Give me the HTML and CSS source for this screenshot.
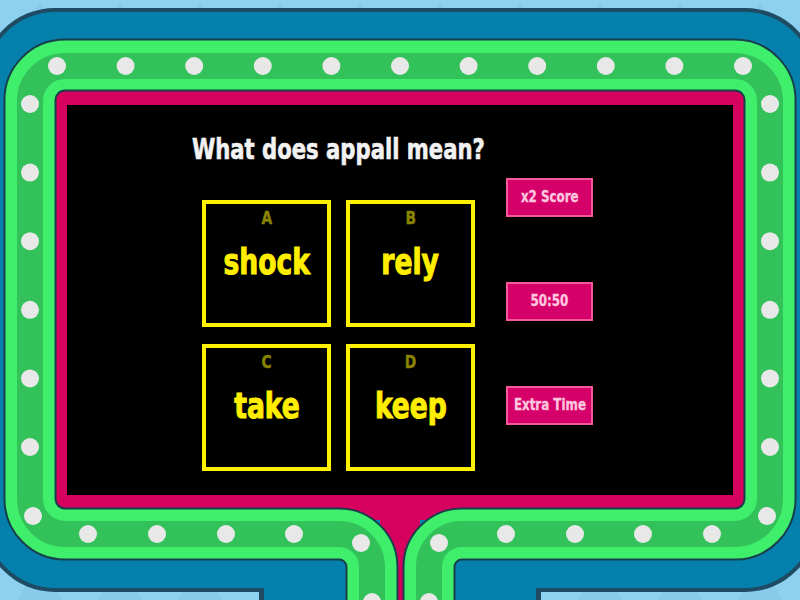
FILE: index.html
```html
<!DOCTYPE html>
<html lang="en">
<head>
<meta charset="utf-8">
<title>Quiz Game Show</title>
<link rel="stylesheet" href="styles.css">
</head>
<body>
<div class="stage">
  <svg class="frame" viewBox="0 0 800 600" width="800" height="600" aria-hidden="true">
    <defs>
      <pattern id="tri" width="80" height="70" patternUnits="userSpaceOnUse">
        <path d="M0 70 L40 0 L80 70 Z" fill="#7fc3e3"/>
      </pattern>
    </defs>
    <rect width="800" height="600" fill="#8dd0ef"/>
    <rect width="800" height="600" fill="url(#tri)" opacity="0.45"/>
    <rect x="-18" y="8" width="836" height="584" rx="73" fill="#1e4b62"/>
    <rect x="259" y="500" width="282" height="110" fill="#1e4b62"/>
    <rect x="-14" y="12" width="828" height="576" rx="69" fill="#0580ad"/>
    <rect x="264" y="500" width="272" height="110" fill="#0580ad"/>
    <rect x="40" y="80" width="720" height="440" fill="#d6005f"/>
    <rect x="380" y="500" width="40" height="110" fill="#d6005f"/>
    <g fill="none">
      <path stroke="#173f4c" stroke-width="53" d="M372 620 V567 A33 33 0 0 0 339 534 H65 A35 35 0 0 1 30 499 V101 A35 35 0 0 1 65 65 H735 A35 35 0 0 1 770 101 V499 A35 35 0 0 1 735 534 H462 A33 33 0 0 0 429 567 V620"/>
      <path stroke="#3fef6c" stroke-width="49" d="M372 620 V567 A33 33 0 0 0 339 534 H65 A35 35 0 0 1 30 499 V101 A35 35 0 0 1 65 65 H735 A35 35 0 0 1 770 101 V499 A35 35 0 0 1 735 534 H462 A33 33 0 0 0 429 567 V620"/>
      <path stroke="#33c159" stroke-width="26" d="M372 620 V567 A33 33 0 0 0 339 534 H65 A35 35 0 0 1 30 499 V101 A35 35 0 0 1 65 66 H735 A35 35 0 0 1 770 101 V499 A35 35 0 0 1 735 534 H462 A33 33 0 0 0 429 567 V620"/>
    </g>
    <g fill="#e8e8e8">
      <circle cx="57" cy="66" r="9"/><circle cx="125.6" cy="66" r="9"/><circle cx="194.2" cy="66" r="9"/>
      <circle cx="262.8" cy="66" r="9"/><circle cx="331.4" cy="66" r="9"/><circle cx="400" cy="66" r="9"/>
      <circle cx="468.6" cy="66" r="9"/><circle cx="537.2" cy="66" r="9"/><circle cx="605.8" cy="66" r="9"/>
      <circle cx="674.4" cy="66" r="9"/><circle cx="743" cy="66" r="9"/>
      <circle cx="30" cy="104" r="9"/><circle cx="30" cy="172.6" r="9"/><circle cx="30" cy="241.2" r="9"/>
      <circle cx="30" cy="309.8" r="9"/><circle cx="30" cy="378.4" r="9"/><circle cx="30" cy="447" r="9"/>
      <circle cx="33" cy="516" r="9"/>
      <circle cx="770" cy="104" r="9"/><circle cx="770" cy="172.6" r="9"/><circle cx="770" cy="241.2" r="9"/>
      <circle cx="770" cy="309.8" r="9"/><circle cx="770" cy="378.4" r="9"/><circle cx="770" cy="447" r="9"/>
      <circle cx="767" cy="516" r="9"/>
      <circle cx="88" cy="534" r="9"/><circle cx="157" cy="534" r="9"/><circle cx="226" cy="534" r="9"/>
      <circle cx="294" cy="534" r="9"/><circle cx="361" cy="543" r="9"/>
      <circle cx="439" cy="543" r="9"/><circle cx="506" cy="534" r="9"/><circle cx="575" cy="534" r="9"/>
      <circle cx="643" cy="534" r="9"/><circle cx="712" cy="534" r="9"/>
      <circle cx="372" cy="602" r="9"/><circle cx="429" cy="602" r="9"/>
    </g>
  </svg>

  <main class="screen">
    <div class="board">
      <section class="quiz">
        <h1 class="question">What does appall mean?</h1>
        <div class="answers">
          <div class="answer"><span class="letter">A</span><span class="word">shock</span></div>
          <div class="answer"><span class="letter">B</span><span class="word">rely</span></div>
          <div class="answer"><span class="letter">C</span><span class="word">take</span></div>
          <div class="answer"><span class="letter">D</span><span class="word">keep</span></div>
        </div>
      </section>
      <aside class="powerups">
        <button class="power" type="button"><span class="power-label">x2 Score</span></button>
        <button class="power" type="button"><span class="power-label">50:50</span></button>
        <button class="power" type="button"><span class="power-label">Extra Time</span></button>
      </aside>
    </div>
  </main>
</div>
</body>
</html>
```

FILE: styles.css
```css
body {
  margin: 0;
  background: #8dd0ef;
}

.stage {
  display: grid;
  grid-template-columns: 800px;
  grid-template-rows: 600px;
  width: 800px;
  height: 600px;
  overflow: hidden;
  font-family: "DejaVu Sans Condensed", "DejaVu Sans", sans-serif;
}

.frame,
.screen {
  grid-area: 1 / 1;
}

.frame {
  display: block;
}

.screen {
  align-self: start;
  justify-self: start;
  box-sizing: border-box;
  width: 666px;
  height: 390px;
  margin: 105px 0 0 67px;
  padding-left: 135px;
  background: #000;
}

.board {
  display: flex;
  gap: 31px;
}

.quiz {
  width: 273px;
  display: flex;
  flex-direction: column;
  align-items: center;
}

.question {
  margin: 0;
  padding-top: 28px;
  font-size: 28px;
  line-height: 33px;
  font-weight: 700;
  color: #f2f2f2;
  white-space: nowrap;
  transform: scaleX(0.84);
  -webkit-text-stroke: 0.6px #f2f2f2;
}

.answers {
  margin-top: 34px;
  display: grid;
  grid-template-columns: 129px 129px;
  grid-auto-rows: 127px;
  column-gap: 15px;
  row-gap: 17px;
}

.answer {
  box-sizing: border-box;
  border: 4px solid #fff200;
  display: flex;
  flex-direction: column;
  align-items: center;
  padding-top: 4px;
}

.letter {
  font-size: 17px;
  line-height: 20px;
  font-weight: 700;
  color: #8a8400;
  transform: scaleX(0.9);
  -webkit-text-stroke: 0.4px #8a8400;
}

.word {
  margin-top: 14px;
  font-size: 36px;
  line-height: 40px;
  font-weight: 700;
  color: #ffee00;
  white-space: nowrap;
  transform: scaleX(0.82);
  -webkit-text-stroke: 1px #ffee00;
}

.powerups {
  display: flex;
  flex-direction: column;
  gap: 65px;
  padding-top: 73px;
}

.power {
  box-sizing: border-box;
  width: 87px;
  height: 39px;
  padding: 0;
  border: 2px solid #f35a9c;
  background: #d6006a;
  color: #ffc6df;
  font-family: inherit;
  font-size: 15px;
  font-weight: 700;
  line-height: 1;
  white-space: nowrap;
}

.power-label {
  display: inline-block;
  transform: scaleX(0.88);
  -webkit-text-stroke: 0.3px #ffc6df;
}
```
